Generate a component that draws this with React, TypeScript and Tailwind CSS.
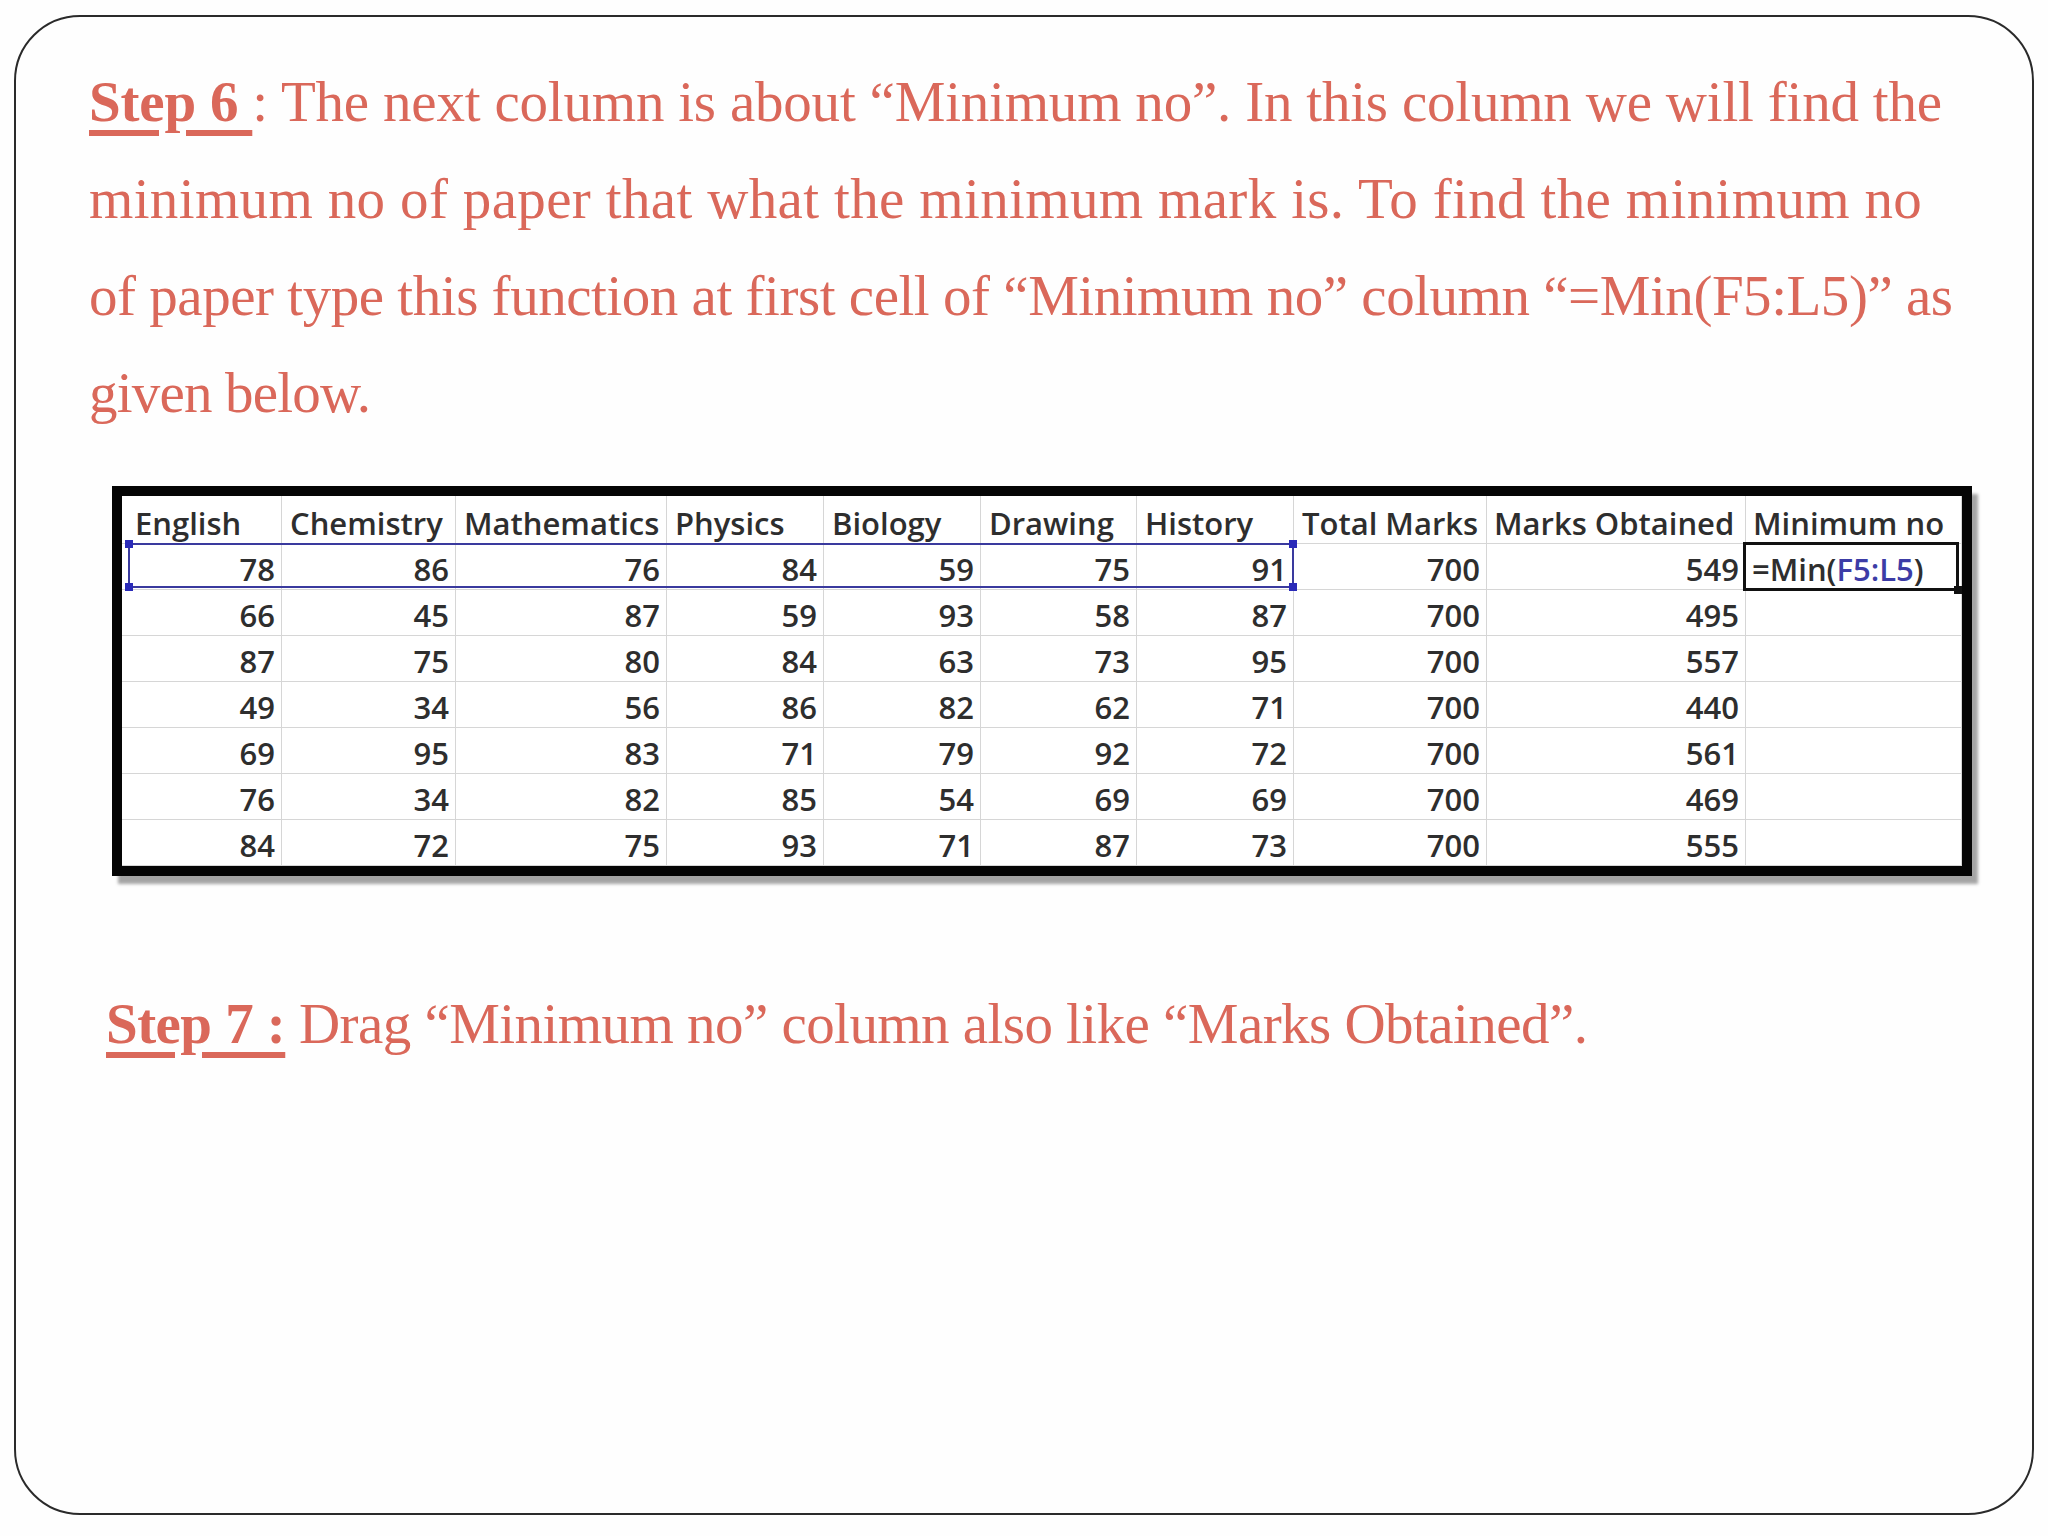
import React from "react";

const cols = [
  { name: "English", pl: "pl-[13px]" },
  { name: "Chemistry", pl: "pl-[8px]" },
  { name: "Mathematics", pl: "pl-[8px]" },
  { name: "Physics", pl: "pl-[8px]" },
  { name: "Biology", pl: "pl-[8px]" },
  { name: "Drawing", pl: "pl-[8px]" },
  { name: "History", pl: "pl-[8px]" },
  { name: "Total Marks", pl: "pl-[8px]" },
  { name: "Marks Obtained", pl: "pl-[7px]" },
  { name: "Minimum no", pl: "pl-[7px]" },
];

const rows = [
  [78, 86, 76, 84, 59, 75, 91, 700, 549],
  [66, 45, 87, 59, 93, 58, 87, 700, 495],
  [87, 75, 80, 84, 63, 73, 95, 700, 557],
  [49, 34, 56, 86, 82, 62, 71, 700, 440],
  [69, 95, 83, 71, 79, 92, 72, 700, 561],
  [76, 34, 82, 85, 54, 69, 69, 700, 469],
  [84, 72, 75, 93, 71, 87, 73, 700, 555],
];

const serif = { fontFamily: '"Liberation Serif", "Times New Roman", serif' };

function Sheet() {
  return (
    <div className="ml-[96px] mt-[45px] w-[1860px] border-[10px] border-[#050505] bg-white shadow-[6px_8px_3px_rgba(0,0,0,0.35)]">
      <div
        className="relative grid grid-cols-[160px_174px_211px_157px_157px_156px_157px_193px_259px_216px] text-[31px] font-semibold text-[#2e2e2e]"
        style={{ fontFamily: '"Open Sans", "Liberation Sans", sans-serif' }}
      >
        {cols.map((c) => (
          <div
            key={c.name}
            className={`h-[48px] border-r border-b border-[#d6d6d6] ${c.pl} flex items-end pb-[4px] leading-none whitespace-nowrap`}
          >
            {c.name}
          </div>
        ))}
        {rows.map((r, ri) => (
          <React.Fragment key={ri}>
            {r.map((v, ci) => (
              <div
                key={ci}
                className="h-[46px] border-r border-b border-[#d6d6d6] pr-[6px] pt-[5px] flex items-center justify-end leading-none"
              >
                {v}
              </div>
            ))}
            <div className="h-[46px] border-r border-b border-[#d6d6d6] pl-[6px] pt-[5px] flex items-center leading-none">
              {ri === 0 ? (
                <span>
                  =Min(<span className="text-[#3c3ca6]">F5:L5</span>)
                </span>
              ) : null}
            </div>
          </React.Fragment>
        ))}

        {/* formula range highlight */}
        <div className="absolute left-[6px] top-[47px] w-[1166px] h-[45px] border-2 border-[#3a3a9e]">
          <div className="absolute -left-[5px] -top-[5px] w-[8px] h-[8px] bg-[#2a2ab8]" />
          <div className="absolute -left-[5px] -bottom-[5px] w-[8px] h-[8px] bg-[#2a2ab8]" />
          <div className="absolute -right-[5px] -top-[5px] w-[8px] h-[8px] bg-[#2a2ab8]" />
          <div className="absolute -right-[5px] -bottom-[5px] w-[8px] h-[8px] bg-[#2a2ab8]" />
        </div>

        {/* active cell */}
        <div className="absolute left-[1621px] top-[46px] w-[216px] h-[49px] border-[3px] border-[#111]">
          <div className="absolute -right-[6px] -bottom-[6px] w-[8px] h-[8px] bg-[#111]" />
        </div>
      </div>
    </div>
  );
}

export default function App() {
  return (
    <div className="w-[2048px] h-[1536px] bg-[#fefefe] pt-[15px] pl-[14px]">
      <div className="w-[2020px] h-[1500px] border-2 border-[#2a2a2a] rounded-[66px] overflow-hidden flex flex-col items-start">
        <div
          className="pl-[73px] mt-[36px] text-[57px] leading-[97px] text-[#da685a]"
          style={serif}
        >
          <div className="whitespace-nowrap tracking-[-0.2px]">
            <span className="font-bold underline decoration-[6px] underline-offset-[9px]">Step 6 </span>
            : The next column is about “Minimum no”. In this column we will find the
          </div>
          <div className="whitespace-nowrap tracking-[0.35px]">
            minimum no of paper that what the minimum mark is. To find the minimum no
          </div>
          <div className="whitespace-nowrap tracking-[-0.47px]">
            of paper type this function at first cell of “Minimum no” column “=Min(F5:L5)” as
          </div>
          <div className="whitespace-nowrap tracking-[-0.8px]">given below.</div>
        </div>

        <Sheet />

        <div
          className="pl-[90px] mt-[99px] text-[57px] leading-[97px] text-[#da685a] whitespace-nowrap tracking-[-0.55px]"
          style={serif}
        >
          <span className="font-bold underline decoration-[6px] underline-offset-[9px]">Step 7 :</span>
          {" "}Drag “Minimum no” column also like “Marks Obtained”.
        </div>
      </div>
    </div>
  );
}
